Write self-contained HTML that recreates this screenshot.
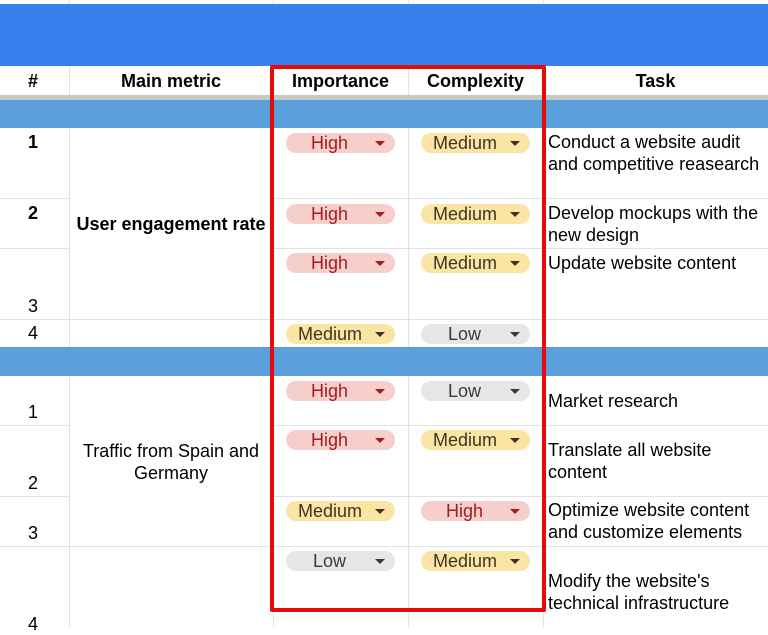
<!DOCTYPE html><html><head><style>
*{margin:0;padding:0;box-sizing:border-box}
body{width:768px;height:627px;overflow:hidden;background:#fff;font-family:"Liberation Sans",Arial,sans-serif;font-size:18px;color:#000;position:relative}
div{position:absolute}
.h{height:1px;background:#e2e2e2}
.v{width:1px;background:#e2e2e2}
.t{line-height:22px;white-space:nowrap}
.b{font-weight:bold}
.c{text-align:center}
.p{height:20px;border-radius:10px;line-height:20px;font-size:18px}
.p span{position:absolute;top:0;line-height:20px}
.p i{position:absolute;right:10px;top:8px;width:0;height:0;border-left:5px solid transparent;border-right:5px solid transparent;border-top:5px solid}
.hi{background:#f6cfcc;color:#a61c1c}
.me{background:#fbe5a4;color:#3d3521}
.lo{background:#e6e6e6;color:#3a3a3a}
</style></head><body>
<div style="left:0;top:4px;width:768px;height:62px;background:#397fee"></div>
<div class="v" style="left:69px;top:0;height:4px"></div>
<div class="v" style="left:273px;top:0;height:4px"></div>
<div class="v" style="left:408px;top:0;height:4px"></div>
<div class="v" style="left:543px;top:0;height:4px"></div>
<div class="v" style="left:69px;top:66px;height:29px"></div>
<div class="v" style="left:408px;top:66px;height:29px"></div>
<div class="t b c" style="left:0;width:66px;top:70px">#</div>
<div class="t b c" style="left:69px;width:204px;top:70px">Main metric</div>
<div class="t b c" style="left:273px;width:135px;top:70px">Importance</div>
<div class="t b c" style="left:408px;width:135px;top:70px">Complexity</div>
<div class="t b c" style="left:543px;width:225px;top:70px">Task</div>
<div style="left:0;top:95px;width:768px;height:5px;background:#c9c9c9"></div>
<div style="left:0;top:100px;width:768px;height:28px;background:#5b9fdb"></div>
<div style="left:0;top:347px;width:768px;height:29px;background:#5b9fdb"></div>
<div class="v" style="left:69px;top:128px;height:219px"></div>
<div class="v" style="left:273px;top:128px;height:219px"></div>
<div class="v" style="left:408px;top:128px;height:219px"></div>
<div class="v" style="left:543px;top:128px;height:219px"></div>
<div class="v" style="left:69px;top:376px;height:251px"></div>
<div class="v" style="left:273px;top:376px;height:251px"></div>
<div class="v" style="left:408px;top:376px;height:251px"></div>
<div class="v" style="left:543px;top:376px;height:251px"></div>
<div class="h" style="left:0;top:198px;width:69px"></div><div class="h" style="left:273px;top:198px;width:495px"></div>
<div class="h" style="left:0;top:248px;width:69px"></div><div class="h" style="left:273px;top:248px;width:495px"></div>
<div class="h" style="left:0;top:319px;width:768px"></div>
<div class="h" style="left:0;top:425px;width:69px"></div><div class="h" style="left:273px;top:425px;width:495px"></div>
<div class="h" style="left:0;top:496px;width:69px"></div><div class="h" style="left:273px;top:496px;width:495px"></div>
<div class="h" style="left:0;top:546px;width:768px"></div>
<div class="t b c" style="left:0;width:66px;top:131px">1</div>
<div class="t b c" style="left:0;width:66px;top:202px">2</div>
<div class="t c" style="left:0;width:66px;top:295px">3</div>
<div class="t c" style="left:0;width:66px;top:322px">4</div>
<div class="t c" style="left:0;width:66px;top:401px">1</div>
<div class="t c" style="left:0;width:66px;top:472px">2</div>
<div class="t c" style="left:0;width:66px;top:522px">3</div>
<div class="t c" style="left:0;width:66px;top:613px">4</div>
<div class="t b c" style="left:69px;width:204px;top:213px">User engagement rate</div>
<div class="t c" style="left:69px;width:204px;top:440px">Traffic from Spain and<br>Germany</div>
<div class="t" style="left:548px;top:131px">Conduct a website audit<br>and competitive reasearch</div>
<div class="t" style="left:548px;top:202px">Develop mockups with the<br>new design</div>
<div class="t" style="left:548px;top:252px">Update website content</div>
<div class="t" style="left:548px;top:390px">Market research</div>
<div class="t" style="left:548px;top:439px">Translate all website<br>content</div>
<div class="t" style="left:548px;top:499px">Optimize website content<br>and customize elements</div>
<div class="t" style="left:548px;top:570px">Modify the website's<br>technical infrastructure</div>
<div class="p hi" style="left:286px;top:133px;width:109px"><span style="left:25px">High</span><i></i></div>
<div class="p hi" style="left:286px;top:204px;width:109px"><span style="left:25px">High</span><i></i></div>
<div class="p hi" style="left:286px;top:253px;width:109px"><span style="left:25px">High</span><i></i></div>
<div class="p me" style="left:286px;top:324px;width:109px"><span style="left:12px">Medium</span><i></i></div>
<div class="p hi" style="left:286px;top:381px;width:109px"><span style="left:25px">High</span><i></i></div>
<div class="p hi" style="left:286px;top:430px;width:109px"><span style="left:25px">High</span><i></i></div>
<div class="p me" style="left:286px;top:501px;width:109px"><span style="left:12px">Medium</span><i></i></div>
<div class="p lo" style="left:286px;top:551px;width:109px"><span style="left:27px">Low</span><i></i></div>
<div class="p me" style="left:421px;top:133px;width:109px"><span style="left:12px">Medium</span><i></i></div>
<div class="p me" style="left:421px;top:204px;width:109px"><span style="left:12px">Medium</span><i></i></div>
<div class="p me" style="left:421px;top:253px;width:109px"><span style="left:12px">Medium</span><i></i></div>
<div class="p lo" style="left:421px;top:324px;width:109px"><span style="left:27px">Low</span><i></i></div>
<div class="p lo" style="left:421px;top:381px;width:109px"><span style="left:27px">Low</span><i></i></div>
<div class="p me" style="left:421px;top:430px;width:109px"><span style="left:12px">Medium</span><i></i></div>
<div class="p hi" style="left:421px;top:501px;width:109px"><span style="left:25px">High</span><i></i></div>
<div class="p me" style="left:421px;top:551px;width:109px"><span style="left:12px">Medium</span><i></i></div>
<div style="left:270px;top:65px;width:276px;height:547px;border:4px solid #e60a0a;border-radius:2px"></div>
</body></html>
